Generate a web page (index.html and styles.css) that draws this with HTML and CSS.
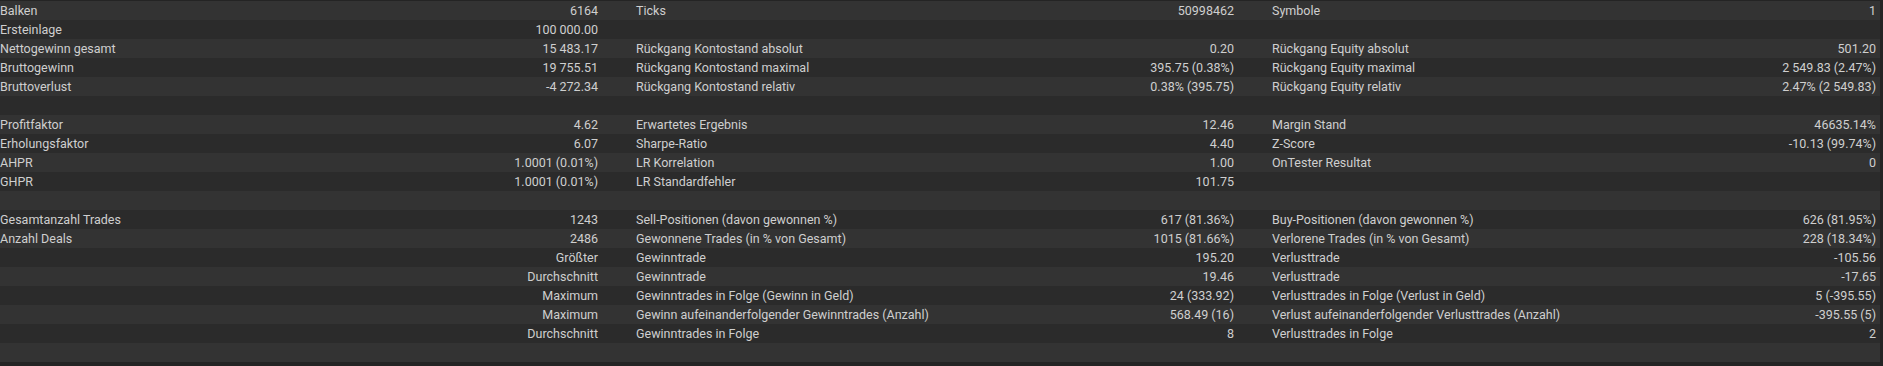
FILE: index.html
```html
<!DOCTYPE html>
<html lang="de">
  <head>
    <meta charset="UTF-8" />
    <meta name="viewport" content="width=device-width, initial-scale=1.0" />
    <title>Testergebnisse</title>
    <link rel="stylesheet" href="styles.css">
  </head>
  <body>
    <div class="report">
      <div class="row">
        <div class="stat"><span>Balken</span><span>6164</span></div>
        <div class="stat"><span>Ticks</span><span>50998462</span></div>
        <div class="stat"><span>Symbole</span><span>1</span></div>
      </div>
      <div class="row">
        <div class="stat"><span>Ersteinlage</span><span>100 000.00</span></div>
        <div class="stat"></div>
        <div class="stat"></div>
      </div>
      <div class="row">
        <div class="stat"><span>Nettogewinn gesamt</span><span>15 483.17</span></div>
        <div class="stat"><span>Rückgang Kontostand absolut</span><span>0.20</span></div>
        <div class="stat"><span>Rückgang Equity absolut</span><span>501.20</span></div>
      </div>
      <div class="row">
        <div class="stat"><span>Bruttogewinn</span><span>19 755.51</span></div>
        <div class="stat"><span>Rückgang Kontostand maximal</span><span>395.75 (0.38%)</span></div>
        <div class="stat"><span>Rückgang Equity maximal</span><span>2 549.83 (2.47%)</span></div>
      </div>
      <div class="row">
        <div class="stat"><span>Bruttoverlust</span><span>-4 272.34</span></div>
        <div class="stat"><span>Rückgang Kontostand relativ</span><span>0.38% (395.75)</span></div>
        <div class="stat"><span>Rückgang Equity relativ</span><span>2.47% (2 549.83)</span></div>
      </div>
      <div class="row"></div>
      <div class="row">
        <div class="stat"><span>Profitfaktor</span><span>4.62</span></div>
        <div class="stat"><span>Erwartetes Ergebnis</span><span>12.46</span></div>
        <div class="stat"><span>Margin Stand</span><span>46635.14%</span></div>
      </div>
      <div class="row">
        <div class="stat"><span>Erholungsfaktor</span><span>6.07</span></div>
        <div class="stat"><span>Sharpe-Ratio</span><span>4.40</span></div>
        <div class="stat"><span>Z-Score</span><span>-10.13 (99.74%)</span></div>
      </div>
      <div class="row">
        <div class="stat"><span>AHPR</span><span>1.0001 (0.01%)</span></div>
        <div class="stat"><span>LR Korrelation</span><span>1.00</span></div>
        <div class="stat"><span>OnTester Resultat</span><span>0</span></div>
      </div>
      <div class="row">
        <div class="stat"><span>GHPR</span><span>1.0001 (0.01%)</span></div>
        <div class="stat"><span>LR Standardfehler</span><span>101.75</span></div>
        <div class="stat"></div>
      </div>
      <div class="row"></div>
      <div class="row">
        <div class="stat"><span>Gesamtanzahl Trades</span><span>1243</span></div>
        <div class="stat"><span>Sell-Positionen (davon gewonnen %)</span><span>617 (81.36%)</span></div>
        <div class="stat"><span>Buy-Positionen (davon gewonnen %)</span><span>626 (81.95%)</span></div>
      </div>
      <div class="row">
        <div class="stat"><span>Anzahl Deals</span><span>2486</span></div>
        <div class="stat"><span>Gewonnene Trades (in % von Gesamt)</span><span>1015 (81.66%)</span></div>
        <div class="stat"><span>Verlorene Trades (in % von Gesamt)</span><span>228 (18.34%)</span></div>
      </div>
      <div class="row">
        <div class="stat"><span></span><span>Größter</span></div>
        <div class="stat"><span>Gewinntrade</span><span>195.20</span></div>
        <div class="stat"><span>Verlusttrade</span><span>-105.56</span></div>
      </div>
      <div class="row">
        <div class="stat"><span></span><span>Durchschnitt</span></div>
        <div class="stat"><span>Gewinntrade</span><span>19.46</span></div>
        <div class="stat"><span>Verlusttrade</span><span>-17.65</span></div>
      </div>
      <div class="row">
        <div class="stat"><span></span><span>Maximum</span></div>
        <div class="stat"><span>Gewinntrades in Folge (Gewinn in Geld)</span><span>24 (333.92)</span></div>
        <div class="stat"><span>Verlusttrades in Folge (Verlust in Geld)</span><span>5 (-395.55)</span></div>
      </div>
      <div class="row">
        <div class="stat"><span></span><span>Maximum</span></div>
        <div class="stat"><span>Gewinn aufeinanderfolgender Gewinntrades (Anzahl)</span><span>568.49 (16)</span></div>
        <div class="stat"><span>Verlust aufeinanderfolgender Verlusttrades (Anzahl)</span><span>-395.55 (5)</span></div>
      </div>
      <div class="row">
        <div class="stat"><span></span><span>Durchschnitt</span></div>
        <div class="stat"><span>Gewinntrades in Folge</span><span>8</span></div>
        <div class="stat"><span>Verlusttrades in Folge</span><span>2</span></div>
      </div>
      <div class="row"></div>
    </div>
  </body>
</html>
```

FILE: styles.css
```css
/* Dark report table, rows alternate */
body {
  margin: 0;
  padding: 0;
  background: #242424;
  color: #cfcfcf;
  font-family: Roboto, "Open Sans", sans-serif;
  font-size: 12.5px;
  overflow: hidden;
}

.report {
  width: 1880px;
  padding-top: 1px;
}

.row {
  display: grid;
  grid-template-columns: 636px 636px 1fr;
  box-sizing: border-box;
  height: 19px;
  padding-top: 1px;
  line-height: 18px;
  background: #2b2b2b;
}

.row:nth-child(odd) {
  background: #333333;
}

.stat {
  display: flex;
  justify-content: space-between;
  padding-right: 38px;
  white-space: nowrap;
}

.stat:last-child {
  padding-right: 4px;
}
```
